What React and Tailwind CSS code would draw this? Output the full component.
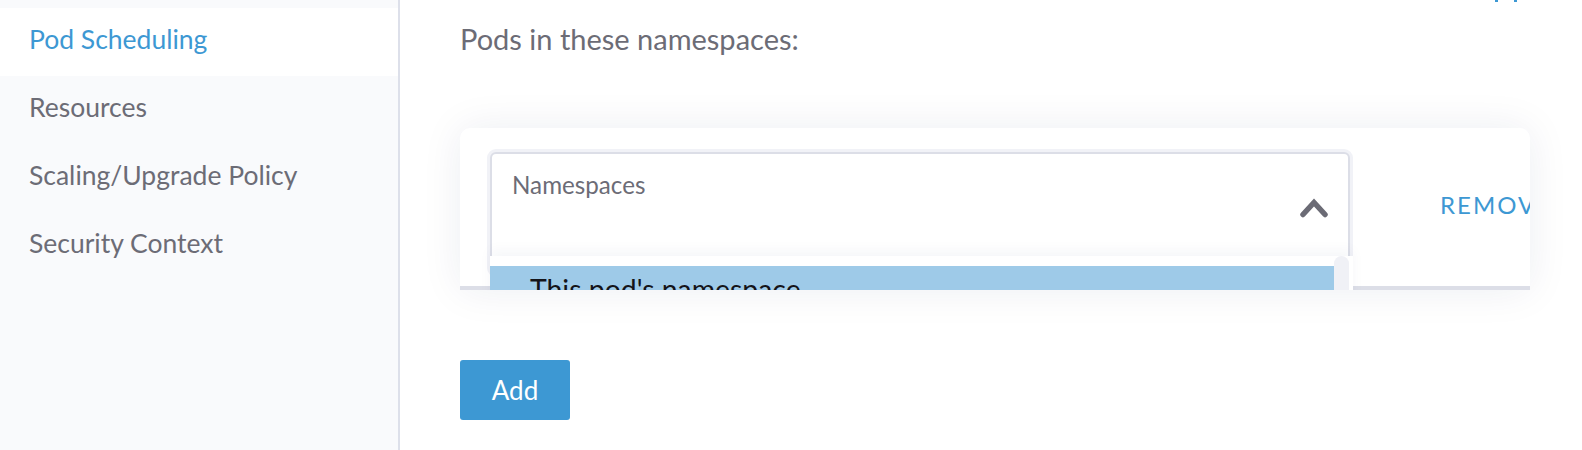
import React from "react";

const items = ["Pod Scheduling", "Resources", "Scaling/Upgrade Policy", "Security Context"];

export default function App() {
  return (
    <div className="flex h-[450px] w-[1582px] overflow-hidden bg-white font-['Lato',sans-serif]">
      <aside className="w-[400px] shrink-0 border-r-2 border-[#dde0ea] bg-[#f9fafc] pt-[8px]">
        {items.map((t, i) => (
          <div
            key={t}
            className={
              i === 0
                ? "flex h-[68px] items-center bg-white pb-[4px] pl-[29px] text-[26.5px] text-[#3d98d3]"
                : "flex h-[68px] items-center pb-[4px] pl-[29px] text-[26.5px] text-[#6c6c76]"
            }
          >
            {t}
          </div>
        ))}
      </aside>
      <main className="relative flex-1 pl-[60px]">
        <span className="absolute left-[1095px] top-0 h-[2px] w-[3px] bg-[#3d98d3]" />
        <span className="absolute left-[1114px] top-0 h-[2px] w-[3px] bg-[#3d98d3]" />
        <p className="mt-[19px] text-[29px] leading-[40px] text-[#6c6c76]">Pods in these namespaces:</p>
        <div className="relative mt-[69px] flex h-[162px] w-[1070px] flex-col overflow-hidden rounded-t-[10px] bg-white shadow-[0_0_40px_rgba(30,40,90,0.08)]">
          <div className="flex flex-1 items-start pl-[30px] pt-[24px]">
            <div className="flex h-[122px] w-[860px] shrink-0 items-start justify-between rounded-[6px] border-2 border-[#dcdee7] bg-white pl-[20px] pr-[20px] pt-[15px] shadow-[0_0_0_3px_#f1f2f7]">
              <span className="text-[24.2px] leading-[32px] text-[#6c6c76]">Namespaces</span>
              <svg className="mt-[27px]" width="28" height="22" viewBox="0 0 28 22">
                <polyline points="3,18.5 14,6.5 25,18.5" fill="none" stroke="#6b6b75" strokeWidth="5.5" strokeLinecap="round" strokeLinejoin="miter" />
              </svg>
            </div>
            <button className="ml-[90px] mt-[37px] whitespace-nowrap text-[24px] uppercase leading-[32px] tracking-[2px] text-[#3d98d3]">
              Remove
            </button>
          </div>
          <div className="h-[4px] shrink-0 bg-[#dcdee7]" />
          <div className="absolute left-[30px] top-[128px] z-10 flex h-[60px] w-[863px] bg-white shadow-[0_-6px_12px_rgba(30,40,90,0.04)]">
            <div className="flex-1 pt-[10px]">
              <div className="h-[50px] bg-[#9ecae8] pl-[40px] pt-[3px] text-[28.4px] leading-[40px] text-[#141419]">
                This pod's namespace
              </div>
            </div>
            <div className="mr-[4px] w-[15px] rounded-t-full bg-[#f0f1f6]" />
          </div>
        </div>
        <button className="mt-[70px] flex h-[60px] w-[110px] items-center justify-center rounded-[3px] bg-[#3d98d3] text-[26px] text-white">
          Add
        </button>
      </main>
    </div>
  );
}
